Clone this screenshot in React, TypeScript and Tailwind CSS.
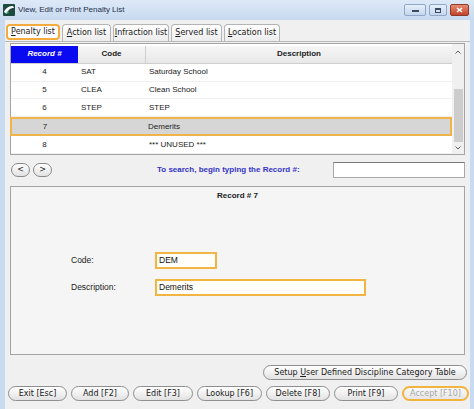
import React from "react";

const ui = "font-['DejaVu_Sans',sans-serif]";
const ar = "font-['Liberation_Sans',Arial,sans-serif]";

interface Row {
  id: number;
  code: string;
  desc: string;
  selected?: boolean;
}

const rows: Row[] = [
  { id: 4, code: "SAT", desc: "Saturday School" },
  { id: 5, code: "CLEA", desc: "Clean School" },
  { id: 6, code: "STEP", desc: "STEP" },
  { id: 7, code: "", desc: "Demerits", selected: true },
  { id: 8, code: "", desc: "*** UNUSED ***" },
];

function Tab({ label, u, w, active }: { label: string; u: string; w: string; active?: boolean }) {
  const rest = label.slice(1);
  return (
    <div
      className={
        active
          ? `${w} h-[16px] rounded-[4px] border-2 border-[#f2ab3c] bg-white flex items-center justify-center`
          : `${w} h-[17px] rounded-t-[4px] border border-b-0 border-[#b4b4b4] bg-gradient-to-b from-white to-[#ececec] flex items-center justify-center`
      }
    >
      <span className={`${ui} text-[8px] text-[#1a1a1a]`}>
        <span className="underline underline-offset-1">{u}</span>
        {rest}
      </span>
    </div>
  );
}

function Btn({ children, w, accent }: { children: React.ReactNode; w: string; accent?: boolean }) {
  return (
    <div
      className={
        accent
          ? `${w} h-[15px] rounded-full border-2 border-[#f3b33f] bg-gradient-to-b from-[#fafafa] to-[#e6e6e6] flex items-center justify-center`
          : `${w} h-[15px] rounded-full border border-[#8e8e8e] bg-gradient-to-b from-white to-[#e2e2e2] flex items-center justify-center`
      }
    >
      <span className={`${ui} text-[8px] leading-none ${accent ? "text-[#a8a8a8]" : "text-[#1a1a1a]"}`}>
        {children}
      </span>
    </div>
  );
}

export default function App() {
  return (
    <div className="w-[474px] h-[409px] bg-[#c9dbf1] flex flex-col overflow-hidden">
      {/* Title bar */}
      <div className="h-[20px] flex items-center bg-gradient-to-b from-[#dde9f7] to-[#c8daf0]">
        <svg className="ml-[3px] w-[12px] h-[12px]" viewBox="0 0 12 12">
          <rect x="0" y="0" width="12" height="12" rx="1" fill="#1d4a3f" />
          <path d="M1 8 C3 3 7 2 10 2 L11 4 C7 4 5 6 4 10 Z" fill="#ffffff" />
          <path d="M2 10 L5 7 L6 9 Z" fill="#3fa36b" />
        </svg>
        <span className={`${ar} ml-[3px] text-[8px] text-[#1e2f4a]`}>View, Edit or Print Penalty List</span>
        <div className="ml-auto mr-[5px] flex items-center gap-[3px]">
          <div className="w-[22px] h-[12px] rounded-[2px] border border-[#8ea7c8] bg-gradient-to-b from-[#e6effa] to-[#c5d6ec] flex items-end justify-center pb-[3px]">
            <div className="w-[7px] h-[2px] bg-[#3a4a60]" />
          </div>
          <div className="w-[18px] h-[12px] rounded-[2px] border border-[#8ea7c8] bg-gradient-to-b from-[#e6effa] to-[#c5d6ec] flex items-center justify-center">
            <div className="w-[6px] h-[5px] border border-[#3a4a60] border-t-2" />
          </div>
          <div className="w-[19px] h-[12px] rounded-[2px] border border-[#8e3a2a] bg-gradient-to-b from-[#e48a72] to-[#c4412b] flex items-center justify-center">
            <svg className="w-[7px] h-[6px]" viewBox="0 0 7 6">
              <path d="M1 1 L6 5 M6 1 L1 5" stroke="#ffffff" strokeWidth="1.6" />
            </svg>
          </div>
        </div>
      </div>

      {/* Body */}
      <div className="flex-1 ml-[5px] mr-[4px] bg-[#f0f0f0] flex flex-col">
        {/* Tabs */}
        <div className="mt-[4px] h-[17px] pl-[1px] flex items-end gap-[2px]">
          <div className="h-[17px] flex items-start">
            <Tab label="Penalty list" u="P" w="w-[54px]" active />
          </div>
          <Tab label="Action list" u="A" w="w-[49px]" />
          <Tab label="Infraction list" u="I" w="w-[56px]" />
          <Tab label="Served list" u="S" w="w-[51px]" />
          <Tab label="Location list" u="L" w="w-[56px]" />
        </div>

        <div className="border-t border-[#b8b8b8] pt-[1px] flex flex-col">
          {/* Grid */}
          <div className="ml-[5px] w-[455px] h-[112px] border border-[#a4a4a4] bg-white flex">
            <div className="flex-1 flex flex-col pt-[2px]">
              <div className="h-[18px] flex bg-gradient-to-b from-[#f6f6f6] to-[#e8e8e8] border-b border-[#cfcfcf]">
                <div className="w-[67px] bg-[#0a0af0] flex items-center justify-center">
                  <span className={`${ar} text-[8px] font-bold italic text-white`}>Record #</span>
                </div>
                <div className="w-[68px] border-r border-[#cfcfcf] flex items-center justify-center">
                  <span className={`${ar} text-[8px] font-bold text-[#222]`}>Code</span>
                </div>
                <div className="flex-1 flex items-center justify-center">
                  <span className={`${ar} text-[8px] font-bold text-[#222]`}>Description</span>
                </div>
              </div>
              {rows.map((r) =>
                r.selected ? (
                  <div
                    key={r.id}
                    className="-ml-[1px] h-[19px] flex items-center bg-[#d6d6d6] border-2 border-[#efb54a]"
                  >
                    <div className={`${ar} w-[66px] text-center text-[8px] text-[#222]`}>{r.id}</div>
                    <div className={`${ar} w-[68px] pl-[3px] text-[8px] text-[#222]`}>{r.code}</div>
                    <div className={`${ar} flex-1 pl-[2px] text-[8px] text-[#222]`}>{r.desc}</div>
                  </div>
                ) : (
                  <div key={r.id} className="h-[18px] flex items-center border-b border-[#f0f0f0]">
                    <div className={`${ar} w-[67px] text-center text-[8px] text-[#222]`}>{r.id}</div>
                    <div className={`${ar} w-[68px] pl-[3px] text-[8px] text-[#222]`}>{r.code}</div>
                    <div className={`${ar} flex-1 pl-[3px] text-[8px] text-[#222]`}>{r.desc}</div>
                  </div>
                )
              )}
            </div>
            {/* Scrollbar */}
            <div className="w-[12px] bg-[#f0f0f0] flex flex-col items-center">
              <div className="h-[16px] flex items-center justify-center">
                <svg className="w-[6px] h-[4px]" viewBox="0 0 6 4">
                  <path d="M0.5 3.5 L3 1 L5.5 3.5" fill="none" stroke="#606060" strokeWidth="1" />
                </svg>
              </div>
              <div className="mt-[29px] w-[9px] h-[54px] bg-[#cdcdcd]" />
              <div className="mt-auto h-[12px] flex items-center justify-center">
                <svg className="w-[6px] h-[4px]" viewBox="0 0 6 4">
                  <path d="M0.5 0.5 L3 3 L5.5 0.5" fill="none" stroke="#606060" strokeWidth="1" />
                </svg>
              </div>
            </div>
          </div>

          {/* Nav + search */}
          <div className="mt-[7px] h-[16px] flex items-center">
            <div className="ml-[6px] w-[19px] h-[14px] rounded-full border border-[#8a8a8a] bg-gradient-to-b from-white to-[#e2e2e2] flex items-center justify-center">
              <span className={`${ui} text-[8px] leading-none text-[#222]`}>&lt;</span>
            </div>
            <div className="ml-[3px] w-[19px] h-[14px] rounded-full border border-[#8a8a8a] bg-gradient-to-b from-white to-[#e2e2e2] flex items-center justify-center">
              <span className={`${ui} text-[8px] leading-none text-[#222]`}>&gt;</span>
            </div>
            <span className={`${ar} ml-[105px] text-[8px] font-bold text-[#3434c8]`}>
              To search, begin typing the Record #:
            </span>
            <div className="ml-auto mr-[5px] w-[132px] h-[16px] bg-white border border-[#a8a8a8] border-t-[#7a7a7a]" />
          </div>

          {/* Detail panel */}
          <div className="mt-[8px] ml-[5px] w-[455px] h-[169px] border border-[#a4a4a4] bg-[#f5f5f5] flex flex-col">
            <div className={`${ar} mt-[3px] text-center text-[8px] font-bold text-[#222]`}>Record # 7</div>
            <div className="mt-[50px] h-[17px] flex items-center">
              <span className={`${ar} ml-[60px] w-[84px] text-[8.5px] text-[#222]`}>Code:</span>
              <div className="w-[62px] h-[17px] border-2 border-[#f2b443] bg-[#fffef9] flex items-center pl-[2px]">
                <span className={`${ar} text-[8.5px] text-[#111]`}>DEM</span>
              </div>
            </div>
            <div className="mt-[10px] h-[17px] flex items-center">
              <span className={`${ar} ml-[60px] w-[84px] text-[8.5px] text-[#222]`}>Description:</span>
              <div className="w-[211px] h-[17px] border-2 border-[#f2b443] bg-[#fffef9] flex items-center pl-[2px]">
                <span className={`${ar} text-[8.5px] text-[#111]`}>Demerits</span>
              </div>
            </div>
          </div>

          {/* Setup button */}
          <div className="mt-[10px] self-end mr-[3px]">
            <Btn w="w-[204px]">
              Setup <span className="underline underline-offset-1">U</span>ser Defined Discipline Category Table
            </Btn>
          </div>

          {/* Bottom buttons */}
          <div className="mt-[6px] pl-[3px] flex gap-[4px]">
            <Btn w="w-[59px]">Exit [Esc]</Btn>
            <Btn w="w-[58px]">Add [F2]</Btn>
            <Btn w="w-[60px]">Edit [F3]</Btn>
            <Btn w="w-[65px]">Lookup [F6]</Btn>
            <Btn w="w-[64px]">Delete [F8]</Btn>
            <Btn w="w-[64px]">Print [F9]</Btn>
            <Btn w="w-[67px]" accent>Accept [F10]</Btn>
          </div>
        </div>
      </div>
    </div>
  );
}
